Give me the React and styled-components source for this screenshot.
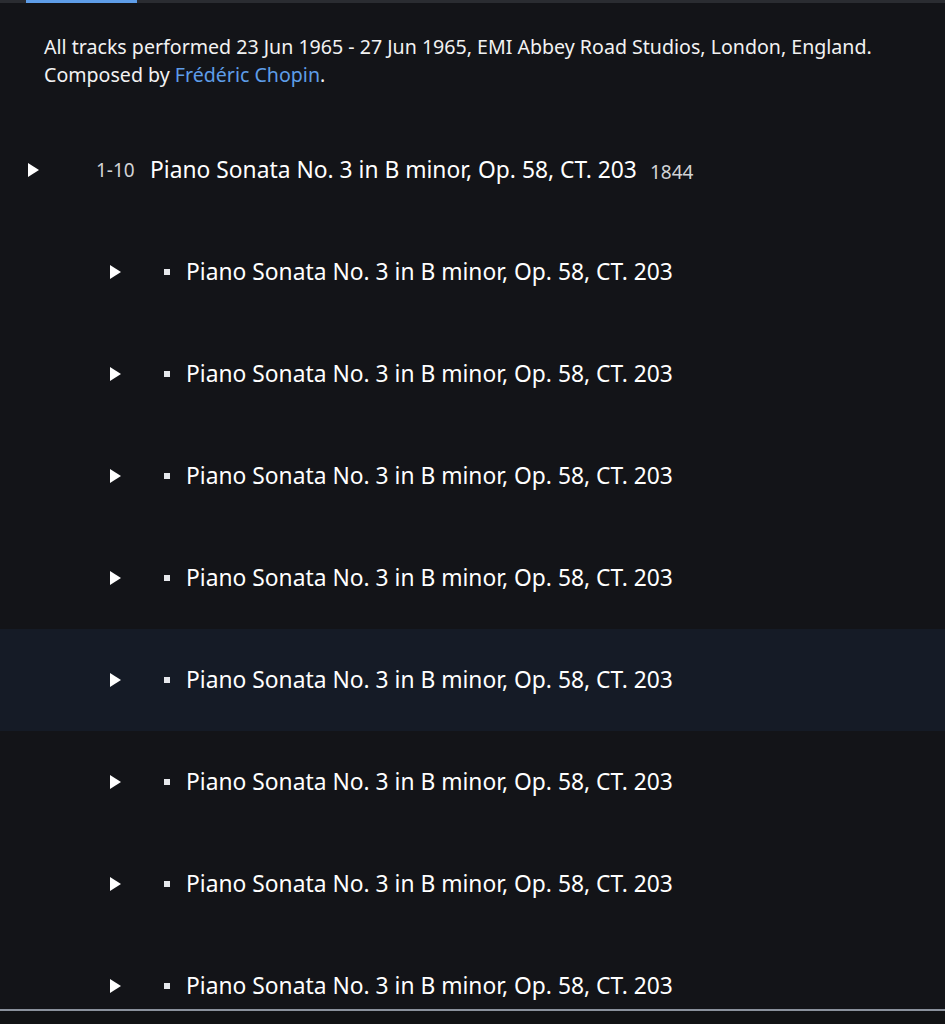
import React from 'react'
import styled, { createGlobalStyle } from 'styled-components'

const GlobalStyle = createGlobalStyle`
  html, body {
    margin: 0;
    padding: 0;
    background: #131418;
    overflow: hidden;
  }
  body {
    font-family: "Noto Sans", "Open Sans", sans-serif;
    color: #fff;
  }
`;

const Page = styled.div`
  height: 1024px;
  overflow: hidden;
  display: flex;
  flex-direction: column;
`;

const Tabs = styled.div`
  height: 3px;
  background: #2a2c31;
  display: flex;
  padding-left: 26px;
`;

const TabIndicator = styled.div`
  width: 111px;
  height: 3px;
  background: #5e9de8;
`;

const Notes = styled.p`
  margin: 30px 0 0;
  padding: 0 44px;
  font-size: 19.6px;
  line-height: 28px;
  color: #f2f2f2;
`;

const Link = styled.a`
  color: #5e9de8;
  text-decoration: none;
`;

const List = styled.div`
  margin-top: 30px;
  display: flex;
  flex-direction: column;
`;

const Row = styled.div`
  height: 102px;
  flex-shrink: 0;
  display: flex;
  align-items: center;
  padding-left: ${(p) => (p.$nested ? '110px' : '28px')};
  background: ${(p) => (p.$active ? '#151b26' : 'transparent')};
`;

const Toggle = styled.span`
  width: 0;
  height: 0;
  border-top: 7px solid transparent;
  border-bottom: 7px solid transparent;
  border-left: 11px solid #fff;
  flex-shrink: 0;
`;

const Range = styled.span`
  margin-left: 57px;
  font-size: 19px;
  color: #d2d3d6;
  width: 54px;
`;

const Bullet = styled.span`
  width: 6px;
  height: 6px;
  background: #e6e8ec;
  margin-left: 43px;
  margin-right: 16px;
  flex-shrink: 0;
`;

const Title = styled.span`
  font-size: 22.8px;
  color: #fff;
  line-height: 30px;
`;

const Year = styled.span`
  margin-left: 13px;
  font-size: 19px;
  color: #d2d3d6;
  margin-top: 3px;
`;

const BottomBar = styled.div`
  position: fixed;
  left: 0;
  right: 0;
  bottom: 0;
  height: 13px;
  border-top: 2px solid #8a919c;
  background: #111214;
`;

const title = 'Piano Sonata No. 3 in B minor, Op. 58, CT. 203';

export default function App() {
  const movements = Array.from({ length: 8 }, (_, i) => i);
  return (
    <>
      <GlobalStyle />
      <Page>
        <Tabs>
          <TabIndicator />
        </Tabs>
        <Notes>
          All tracks performed 23 Jun 1965 - 27 Jun 1965, EMI Abbey Road Studios, London, England.
          <br />
          Composed by <Link href="#">Frédéric Chopin</Link>.
        </Notes>
        <List>
          <Row>
            <Toggle />
            <Range>1-10</Range>
            <Title>{title}</Title>
            <Year>1844</Year>
          </Row>
          {movements.map((i) => (
            <Row key={i} $nested $active={i === 4}>
              <Toggle />
              <Bullet />
              <Title>{title}</Title>
            </Row>
          ))}
        </List>
      </Page>
      <BottomBar />
    </>
  )
}
